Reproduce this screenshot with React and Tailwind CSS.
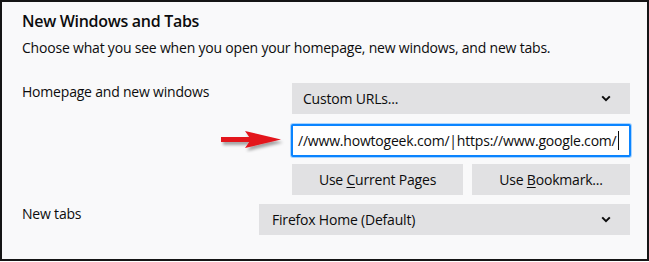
import React from 'react';

function Chevron() {
    return (
        <svg width="10" height="7" viewBox="0 0 10 7" className="shrink-0">
            <path d="M1.2 1.4 L5 5.2 L8.8 1.4" fill="none" stroke="#0c0c0d" strokeWidth="2" />
        </svg>
    );
}

function Arrow() {
    return (
        <svg width="70" height="26" viewBox="0 0 70 26" className="absolute left-[-72px] top-[3px]">
            <defs>
                <filter id="sh" x="-20%" y="-40%" width="140%" height="180%">
                    <feDropShadow dx="2" dy="3" stdDeviation="1.6" floodColor="#000" floodOpacity="0.35" />
                </filter>
            </defs>
            <g filter="url(#sh)">
                <rect x="2" y="10" width="30" height="5" fill="#e3141c" />
                <path d="M26 4 L62 12.5 L26 21 L32 12.5 Z" fill="#e3141c" />
            </g>
        </svg>
    );
}

export default function App() {
    return (
        <div className="w-[649px] h-[261px] bg-[#f9f9fa] border-2 border-[#151515] text-[#0c0c0d] font-['Open_Sans',sans-serif] tracking-[-0.2px] pl-[20px] pr-[16px] pt-[8px]">
            <h2 className="text-[16px] leading-[22px] font-semibold tracking-[-0.3px]">New Windows and Tabs</h2>
            <p className="text-[14px] leading-[20px] mt-[6px]">Choose what you see when you open your homepage, new windows, and new tabs.</p>

            <div className="flex justify-between items-start mt-[25px]">
                <span className="text-[14px] leading-[16px] mt-[1px]">Homepage and new windows</span>
                <div className="w-[340px] flex flex-col">
                    <div className="mx-[1px] h-[31px] bg-[#e1e1e3] flex items-center justify-between pl-[11px] pr-[19px] text-[14px]">
                        <span>Custom URLs...</span>
                        <Chevron />
                    </div>
                    <div className="relative mt-[10px]">
                        <Arrow />
                        <div className="h-[33px] bg-white border-2 border-[#0a84ff] shadow-[0_0_0_1px_#a8d4ff] rounded-[2px] flex items-center pl-[5px] text-[14px] whitespace-nowrap overflow-hidden">
                            <span>//www.howtogeek.com/|https://www.google.com/</span>
                            <span className="inline-block w-[1px] h-[19px] bg-[#0c0c0d] ml-[1px]" />
                        </div>
                    </div>
                    <div className="mx-[1px] mt-[7px] grid grid-cols-[171px_158px] gap-[9px] text-[14px]">
                        <div className="h-[31px] bg-[#e1e1e3] flex items-center justify-center">
                            <span>Use <span className="underline underline-offset-2">C</span>urrent Pages</span>
                        </div>
                        <div className="h-[31px] bg-[#e1e1e3] flex items-center justify-center">
                            <span>Use <span className="underline underline-offset-2">B</span>ookmark...</span>
                        </div>
                    </div>
                </div>
            </div>

            <div className="flex justify-between items-start mt-[9px]">
                <span className="text-[14px] leading-[16px] mt-[2px]">New tabs</span>
                <div className="w-[371px] mr-[1px] h-[31px] bg-[#e1e1e3] flex items-center justify-between pl-[13px] pr-[19px] text-[14px]">
                    <span>Firefox Home (Default)</span>
                    <Chevron />
                </div>
            </div>
        </div>
    );
}
